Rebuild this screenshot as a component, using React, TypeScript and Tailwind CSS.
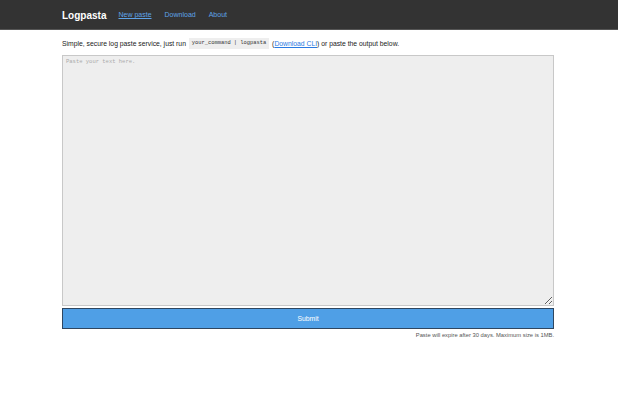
const App = () => {
  return (
    <div className="min-h-[394px] bg-white font-['Liberation_Sans',Arial,sans-serif] text-[#222]">
      <header className="h-[30px] bg-[#333333] border-b border-[#555]">
        <div className="w-[492px] ml-[62px] h-full pt-[2px] flex items-center">
          <span className="text-white font-bold text-[10px] mr-[12px]">Logpasta</span>
          <nav className="flex items-center gap-[13px] text-[7px] text-[#5fa3e8]">
            <a className="underline">New paste</a>
            <a>Download</a>
            <a>About</a>
          </nav>
        </div>
      </header>

      <main className="w-[492px] ml-[62px] pt-[8px]">
        <p className="text-[6.8px] leading-[9px] flex items-center">
          <span>Simple, secure log paste service, just run&nbsp;</span>
          <code className="bg-[#eeeeee] px-[3px] py-[1px] mx-[1px] text-[5.4px] font-['Liberation_Mono',monospace] text-[#333]">
            your_command | logpasta
          </code>
          <span>
            &nbsp;(<a className="text-[#2a7ae2] underline">Download CLI</a>) or paste the output below.
          </span>
        </p>

        <textarea
          className="mt-[6px] block w-full h-[251px] bg-[#eeeeee] border border-[#c8c8c8] px-[3px] py-[2px] text-[5.5px] font-['Liberation_Mono',monospace] placeholder:text-[#aaa] outline-none"
          placeholder="Paste your text here."
        />

        <button className="block mt-[2px] w-full h-[21px] bg-[#4f9fe6] border border-[#2f4660] text-white text-[6.8px] pt-[1px]">
          Submit
        </button>

        <p className="mt-[2px] text-right text-[5.8px] text-[#555]">
          Paste will expire after 30 days. Maximum size is 1MB.
        </p>
      </main>
    </div>
  );
};

export default App;
